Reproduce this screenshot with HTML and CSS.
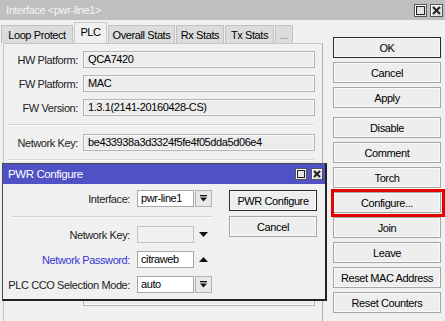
FILE: index.html
```html
<!DOCTYPE html>
<html>
<head>
<meta charset="utf-8">
<link rel="stylesheet" href="styles.css">
</head>
<body>
<div class="win">
  <div class="titlebar">
    <span class="title">Interface &lt;pwr-line1&gt;</span>
    <div class="tb-icons">
      <span class="ico"><svg width="9" height="9" viewBox="0 0 9 9"><rect x="0.5" y="0.5" width="8" height="8" fill="none" stroke="#222" stroke-width="1"/></svg></span>
      <span class="ico"><svg width="9" height="9" viewBox="0 0 9 9"><path d="M1 1L8 8M8 1L1 8" stroke="#222" stroke-width="2"/></svg></span>
    </div>
  </div>
  <div class="main">
    <div class="left">
      <div class="tabs">
        <span class="tab w-loop">Loop Protect</span>
        <span class="tab active w-plc">PLC</span>
        <span class="tab w-over">Overall Stats</span>
        <span class="tab w-rx">Rx Stats</span>
        <span class="tab w-tx">Tx Stats</span>
        <span class="tab w-more">...</span>
      </div>
      <div class="panel">
        <div class="row"><span class="lbl">HW Platform:</span><span class="fld">QCA7420</span></div>
        <div class="row"><span class="lbl">FW Platform:</span><span class="fld">MAC</span></div>
        <div class="row"><span class="lbl">FW Version:</span><span class="fld">1.3.1(2141-20160428-CS)</span></div>
        <div class="sep"></div>
        <div class="row"><span class="lbl">Network Key:</span><span class="fld">be433938a3d3324f5fe4f05dda5d06e4</span></div>
        <div class="sep"></div>
        <div class="row"><span class="lbl"></span><span class="fld"></span></div>
        <div class="row"><span class="lbl"></span><span class="fld"></span></div>
        <div class="row"><span class="lbl"></span><span class="fld"></span></div>
        <div class="row"><span class="lbl"></span><span class="fld"></span></div>
        <div class="row"><span class="lbl"></span><span class="fld"></span></div>
        <div class="row"><span class="lbl"></span><span class="fld"></span></div>
      </div>
    </div>
    <div class="side">
      <button class="btn default">OK</button>
      <button class="btn">Cancel</button>
      <button class="btn">Apply</button>
      <button class="btn gap">Disable</button>
      <button class="btn">Comment</button>
      <button class="btn">Torch</button>
      <div class="hl"><button class="btn">Configure...</button></div>
      <button class="btn">Join</button>
      <button class="btn">Leave</button>
      <button class="btn">Reset MAC Address</button>
      <button class="btn">Reset Counters</button>
    </div>
  </div>

  <div class="dialog">
    <div class="dtitle">
      <span class="dtext">PWR Configure</span>
      <div class="tb-icons dicons">
        <span class="ico sm"><svg width="8" height="8" viewBox="0 0 8 8"><rect x="0.5" y="0.5" width="7" height="7" fill="none" stroke="#222" stroke-width="1"/></svg></span>
        <span class="ico sm"><svg width="8" height="8" viewBox="0 0 8 8"><path d="M1 1L7 7M7 1L1 7" stroke="#222" stroke-width="2"/></svg></span>
      </div>
    </div>
    <div class="dbody">
      <div class="dform">
        <div class="drow"><span class="dlbl">Interface:</span><span class="dfld">pwr-line1</span><span class="ddrop"><svg width="7" height="7" viewBox="0 0 7 7"><rect x="0" y="0" width="7" height="1.3" fill="#111"/><path d="M0 2.5H7L3.5 6.5Z" fill="#111"/></svg></span></div>
        <div class="dsep"></div>
        <div class="drow"><span class="dlbl">Network Key:</span><span class="dfld off"></span><span class="arrow"><svg width="9" height="5" viewBox="0 0 9 5"><path d="M0 0H9L4.5 5Z" fill="#111"/></svg></span></div>
        <div class="drow"><span class="dlbl blue">Network Password:</span><span class="dfld">citraweb</span><span class="arrow"><svg width="9" height="5" viewBox="0 0 9 5"><path d="M0 5H9L4.5 0Z" fill="#111"/></svg></span></div>
        <div class="drow"><span class="dlbl">PLC CCO Selection Mode:</span><span class="dfld">auto</span><span class="ddrop"><svg width="7" height="7" viewBox="0 0 7 7"><rect x="0" y="0" width="7" height="1.3" fill="#111"/><path d="M0 2.5H7L3.5 6.5Z" fill="#111"/></svg></span></div>
      </div>
      <div class="dbtns">
        <button class="btn dbtn default">PWR Configure</button>
        <button class="btn dbtn">Cancel</button>
      </div>
    </div>
  </div>
</div>
</body>
</html>
```

FILE: styles.css
```css
* { box-sizing: border-box; }
html, body { margin: 0; padding: 0; }
body {
  font-family: "Liberation Sans", Arial, sans-serif;
  font-size: 11px;
  letter-spacing: -0.4px;
  color: #000;
  background: #f0f0f0;
}
.win {
  position: relative;
  width: 445px;
  height: 321px;
  overflow: hidden;
  background: #f0f0f0;
}
.titlebar {
  height: 20px;
  background: #bfbfbf;
  display: flex;
  align-items: center;
  justify-content: space-between;
  padding: 0 2px 0 6px;
}
.title {
  color: #f4f4f4;
  font-size: 11px;
}
.tb-icons {
  display: flex;
  gap: 3px;
}
.ico {
  width: 13px;
  height: 13px;
  border: 1px solid #555;
  background: #e4e4e4;
  display: flex;
  align-items: center;
  justify-content: center;
  box-shadow: inset 1px 1px 0 #fff;
}
.ico.sm {
  width: 12px;
  height: 12px;
}
.main {
  display: flex;
  height: 301px;
}
.left {
  width: 323px;
  display: flex;
  flex-direction: column;
}
.tabs {
  display: flex;
  align-items: flex-end;
  height: 21px;
  margin-top: 2px;
  margin-left: 1px;
  gap: 1px;
}
.tab {
  height: 18px;
  background: #dcdcdc;
  border: 1px solid #c2c2c2;
  border-bottom: none;
  display: flex;
  align-items: center;
  justify-content: center;
}
.tab.active {
  height: 21px;
  background: #f0f0f0;
  border-color: #cbcbcb;
  padding-bottom: 3px;
}
.w-loop { width: 72px; }
.w-plc { width: 33px; }
.w-over { width: 67px; }
.w-rx { width: 48px; }
.w-tx { width: 49px; }
.w-more { width: 18px; color: #777; }
.panel {
  flex: 1;
  margin-left: 3px;
  border: 1px solid #c6c6c6;
  border-bottom: none;
  border-right-color: #b0b0b0;
  padding: 7px 0 0 0;
  display: flex;
  flex-direction: column;
  gap: 7px;
}
.row {
  display: flex;
  align-items: center;
  height: 17px;
  gap: 5px;
}
.lbl {
  width: 74px;
  text-align: right;
  color: #222;
}
.fld {
  width: 232px;
  height: 17px;
  background: #ececec;
  border: 1px solid #b4b4b4;
  box-shadow: inset 0 0 0 1px #f8f8f8;
  padding: 1px 4px;
  line-height: 13px;
}
.sep {
  height: 2px;
  margin: 1px 8px 1px 4px;
  border-top: 1px solid #d6d6d6;
  border-bottom: 1px solid #fbfbfb;
}
.side {
  flex: 1;
  padding: 17px 0 0 10px;
  display: flex;
  flex-direction: column;
  gap: 4px;
}
.btn {
  width: 108px;
  height: 21px;
  font-family: inherit;
  font-size: 11px;
  letter-spacing: -0.4px;
  color: #000;
  background: #eeeeee;
  border: 1px solid #a6a6a6;
  box-shadow: inset 0 0 0 1px #f9f9f9;
  padding: 0;
  margin: 0;
}
.btn.default {
  border-color: #2a2a2a;
}
.btn.gap { margin-top: 5px; }
.hl {
  position: relative;
  width: 108px;
  height: 21px;
}
.hl::after {
  content: "";
  position: absolute;
  left: -2px;
  top: -3px;
  right: -4px;
  bottom: -4px;
  border: 3px solid #e60000;
}

/* dialog */
.dialog {
  position: absolute;
  left: 2px;
  top: 163px;
  width: 325px;
  height: 138px;
  background: #f0f0f0;
  border: 1px solid #4a4a4a;
  border-right: 2px solid #222;
  border-bottom: 2px solid #222;
}
.dtitle {
  height: 20px;
  background: #5151c6;
  display: flex;
  align-items: center;
  justify-content: space-between;
  padding: 0 2px 0 5px;
}
.dtext {
  color: #fff;
  font-size: 11.5px;
}
.dicons { gap: 4px; }
.dbody {
  display: flex;
  padding: 6px 0 0 0;
}
.dform {
  width: 221px;
  display: flex;
  flex-direction: column;
  gap: 8px;
}
.drow {
  display: flex;
  align-items: center;
  height: 17px;
}
.dlbl {
  width: 127px;
  text-align: right;
  color: #222;
  margin-right: 7px;
}
.dlbl.blue { color: #3434d4; }
.dfld {
  width: 57px;
  height: 17px;
  background: #fff;
  border: 1px solid #a8a8a8;
  padding: 1px 3px;
  line-height: 13px;
}
.dfld.off {
  background: #f0f0f0;
  border-color: #c4c4c4;
}
.ddrop {
  width: 17px;
  height: 17px;
  margin-left: 1px;
  background: #e8e8e8;
  border: 1px solid #b2b2b2;
  display: flex;
  align-items: center;
  justify-content: center;
}
.arrow {
  width: 18px;
  height: 17px;
  display: flex;
  align-items: center;
  justify-content: center;
}
.dsep {
  height: 2px;
  margin: 1px 0 0 9px;
  width: 201px;
  border-top: 1px solid #d6d6d6;
  border-bottom: 1px solid #fbfbfb;
}
.dbtns {
  display: flex;
  flex-direction: column;
  gap: 5px;
  padding-left: 5px;
}
.dbtn {
  width: 88px;
  height: 21px;
}
```
